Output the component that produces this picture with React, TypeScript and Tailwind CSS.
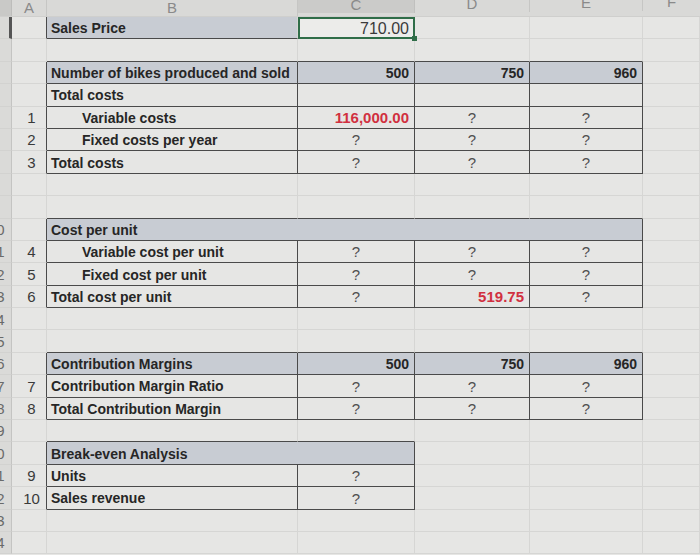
import type { ReactNode } from "react";

interface CellProps {
  w: string;
  r?: boolean;
  b?: boolean;
  shade?: boolean;
  align?: "left" | "right" | "center";
  className?: string;
  children?: ReactNode;
}

const Cell = ({ w, r, b, shade, align = "left", className = "", children }: CellProps) => {
  const alignCls =
    align === "right" ? "justify-end pr-[5px]" : align === "center" ? "justify-center" : "justify-start pl-[4px]";
  return (
    <div
      className={`${w} h-full shrink-0 flex items-center pt-[2px] border-r border-b overflow-hidden whitespace-nowrap ${alignCls} ${
        r ? "border-r-[#4a4a4a]" : "border-r-[#d6d6d4]"
      } ${b ? "border-b-[#4a4a4a]" : "border-b-[#d6d6d4]"} ${shade ? "bg-[#c8ccd3]" : ""} ${className}`}
    >
      {children}
    </div>
  );
};

const Strip = ({ n, sel }: { n?: number; sel?: boolean }) => (
  <div
    className={`w-[12px] h-full shrink-0 overflow-hidden bg-[#dadad8] border-b border-b-[#d2d2d0] ${
      sel ? "border-r-[3px] border-r-[#555]" : "border-r border-r-[#c4c4c2]"
    } flex items-center pt-[2px]`}
  >
    {n !== undefined && (
      <span className="block -translate-x-[12px] text-[15px] text-[#6a6a6a] font-['Liberation_Sans',sans-serif]">
        {n}
      </span>
    )}
  </div>
);

const Idx = ({ n, r }: { n?: string; r?: boolean }) => (
  <Cell w="w-[35px]" r={r} align="center" className="pl-[5px] text-[15px] text-[#3a3a3a]">
    {n}
  </Cell>
);

const Label = ({ children, indent }: { children: ReactNode; indent?: boolean }) => (
  <span className={`font-bold text-[14px] text-[#262626] ${indent ? "pl-[31px]" : ""}`}>{children}</span>
);

const Q = () => <span className="text-[15px] text-[#4f4f4f]">?</span>;
const Num = ({ v }: { v: string }) => <span className="font-bold text-[14px] text-[#262626]">{v}</span>;
const Red = ({ v }: { v: string }) => <span className="font-bold text-[15px] text-[#d1303f]">{v}</span>;

const Row = ({ children }: { children: ReactNode }) => <div className="flex h-[22.4px]">{children}</div>;

const Blank = ({ n, bTable, bShort }: { n?: number; bTable?: boolean; bShort?: boolean }) => (
  <Row>
    <Strip n={n} />
    <Cell w="w-[35px]" />
    <Cell w="w-[251px]" b={bTable || bShort} />
    <Cell w="w-[117px]" b={bTable || bShort} />
    <Cell w="w-[115px]" b={bTable} />
    <Cell w="w-[113px]" b={bTable} />
    <Cell w="flex-1" />
  </Row>
);

const DataRow = ({
  n,
  idx,
  label,
  indent,
  c,
  d,
  e,
}: {
  n?: number;
  idx?: string;
  label: string;
  indent?: boolean;
  c?: ReactNode;
  d?: ReactNode;
  e?: ReactNode;
}) => (
  <Row>
    <Strip n={n} />
    <Idx n={idx} r />
    <Cell w="w-[251px]" r b>
      <Label indent={indent}>{label}</Label>
    </Cell>
    <Cell w="w-[117px]" r b align={c ? "right" : "center"}>
      {c ?? <Q />}
    </Cell>
    <Cell w="w-[115px]" r b align={d ? "right" : "center"}>
      {d ?? <Q />}
    </Cell>
    <Cell w="w-[113px]" r b align="center">
      {e ?? <Q />}
    </Cell>
    <Cell w="flex-1" />
  </Row>
);

const HeaderNums = ({ n, label }: { n?: number; label: string }) => (
  <Row>
    <Strip n={n} />
    <Idx r />
    <Cell w="w-[251px]" r b shade>
      <Label>{label}</Label>
    </Cell>
    <Cell w="w-[117px]" r b shade align="right">
      <Num v="500" />
    </Cell>
    <Cell w="w-[115px]" r b shade align="right">
      <Num v="750" />
    </Cell>
    <Cell w="w-[113px]" r b shade align="right">
      <Num v="960" />
    </Cell>
    <Cell w="flex-1" />
  </Row>
);

export default function App() {
  return (
    <div className="w-[700px] h-[555px] overflow-hidden bg-[#e6e6e4] font-['Liberation_Sans',Arial,sans-serif]">
      {/* column letters */}
      <div className="flex h-[17px] bg-[#d9d9d7] text-[15px] leading-[15px] text-[#8a8a8a] border-b border-[#cfcfcd]">
        <div className="w-[12px] shrink-0 bg-[#c9c9c7] border-r border-[#bdbdbb]" />
        <div className="w-[35px] shrink-0 flex justify-center border-r border-[#c6c6c4]">A</div>
        <div className="w-[251px] shrink-0 flex justify-center border-r border-[#c6c6c4]">B</div>
        <div className="w-[117px] shrink-0 flex justify-center bg-[#cbcbc9] border-r border-[#c0c0be] -translate-y-[3px]">
          C
        </div>
        <div className="w-[115px] shrink-0 flex justify-center border-r border-[#c6c6c4] -translate-y-[4px]">D</div>
        <div className="w-[113px] shrink-0 flex justify-center border-r border-[#c6c6c4] -translate-y-[5px]">E</div>
        <div className="flex-1 flex justify-center -translate-y-[6px]">F</div>
      </div>

      {/* sales price */}
      <Row>
        <Strip sel />
        <Cell w="w-[35px]" r />
        <Cell w="w-[251px]" b shade>
          <Label>Sales Price</Label>
        </Cell>
        <div className="w-[117px] h-full shrink-0 relative border-2 border-[#2f6d48] flex items-center justify-end pr-[4px] pt-[2px] bg-[#ececea]">
          <span className="text-[16px] text-[#3a3a3a]">710.00</span>
          <span className="absolute -bottom-[4px] -right-[4px] w-[5px] h-[5px] bg-[#2f6d48]" />
        </div>
        <Cell w="w-[115px]" />
        <Cell w="w-[113px]" />
        <Cell w="flex-1" />
      </Row>
      <Blank bTable />

      {/* total costs */}
      <HeaderNums label="Number of bikes produced and sold" />
      <DataRow label="Total costs" c={<span />} d={<span />} e={<span />} />
      <DataRow idx="1" label="Variable costs" indent c={<Red v="116,000.00" />} />
      <DataRow idx="2" label="Fixed costs per year" indent />
      <DataRow idx="3" label="Total costs" />
      <Blank />
      <Blank bTable />

      {/* cost per unit */}
      <Row>
        <Strip n={20} />
        <Idx r />
        <Cell w="w-[596px]" r b shade>
          <Label>Cost per unit</Label>
        </Cell>
        <Cell w="flex-1" />
      </Row>
      <DataRow n={21} idx="4" label="Variable cost per unit" indent />
      <DataRow n={22} idx="5" label="Fixed cost per unit" indent />
      <DataRow n={23} idx="6" label="Total cost per unit" d={<Red v="519.75" />} />
      <Blank n={24} />
      <Blank n={25} bTable />

      {/* contribution margins */}
      <HeaderNums n={26} label="Contribution Margins" />
      <DataRow n={27} idx="7" label="Contribution Margin Ratio" />
      <DataRow n={28} idx="8" label="Total Contribution Margin" />
      <Blank n={29} bShort />

      {/* break-even */}
      <Row>
        <Strip n={30} />
        <Idx r />
        <Cell w="w-[368px]" r b shade>
          <Label>Break-even Analysis</Label>
        </Cell>
        <Cell w="w-[115px]" />
        <Cell w="w-[113px]" />
        <Cell w="flex-1" />
      </Row>
      {[
        { n: 31, idx: "9", label: "Units" },
        { n: 32, idx: "10", label: "Sales revenue" },
      ].map((r) => (
        <Row key={r.n}>
          <Strip n={r.n} />
          <Idx n={r.idx} r />
          <Cell w="w-[251px]" r b>
            <Label>{r.label}</Label>
          </Cell>
          <Cell w="w-[117px]" r b align="center">
            <Q />
          </Cell>
          <Cell w="w-[115px]" />
          <Cell w="w-[113px]" />
          <Cell w="flex-1" />
        </Row>
      ))}
      <Blank n={33} />
      <Blank n={34} />
    </div>
  );
}
